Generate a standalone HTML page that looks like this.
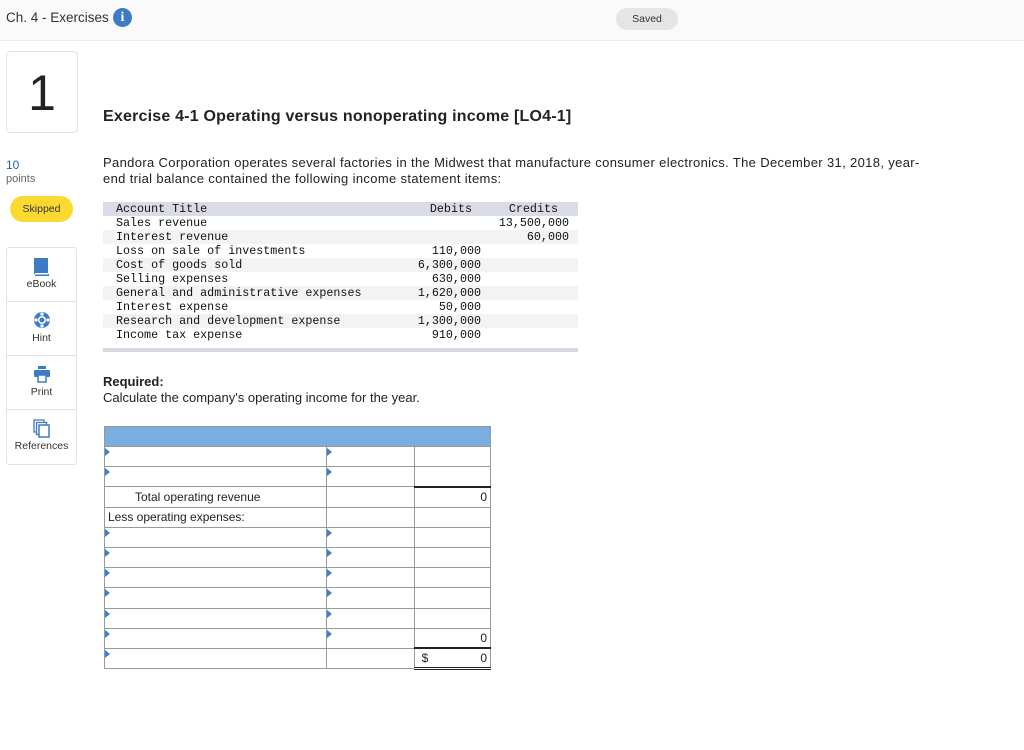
<!DOCTYPE html>
<html><head><style>
*{margin:0;padding:0;box-sizing:border-box}
body{width:1024px;height:750px;background:#fff;font-family:"Liberation Sans",sans-serif;color:#222;position:relative;overflow:hidden}
.abs{position:absolute}
.top{left:0;top:0;width:1024px;height:41px;background:#fafafa;border-bottom:1px solid #ececec}
.mono{font-family:"Liberation Mono",monospace;font-size:11.7px;line-height:14px;color:#111}
.tb{left:103px;width:475px}
.tb div{height:14px;position:relative;white-space:pre}
.tb span{position:absolute}
.side{left:6px;width:71px;border:1px solid #e2e2e2;border-radius:3px}
.side div{height:54px;border-bottom:1px solid #e2e2e2;text-align:center;font-size:10px;color:#333;position:relative}
.side div:last-child{border-bottom:none}
.side svg{position:absolute;left:26px;top:9px}
.side p{position:absolute;width:100%;top:30px}
table{border-collapse:collapse;font-size:12px}
td{border:1px solid #999;height:20.2px;position:relative;padding:0 3px}
.tri{position:absolute;left:0;top:1px;width:0;height:0;border-top:4px solid transparent;border-bottom:4px solid transparent;border-left:5px solid #3f7fc8}
</style></head><body>
<div class="abs top"></div>
<div class="abs" style="left:6px;top:10px;font-size:13.5px;color:#333">Ch. 4 - Exercises</div>
<div class="abs" style="left:113px;top:8px;width:19px;height:19px;border-radius:50%;background:#3d7bc4;color:#fff;font:bold 14px 'Liberation Serif',serif;text-align:center;line-height:19px">i</div>
<div class="abs" style="left:616px;top:8px;width:62px;height:22px;border-radius:11px;background:#e5e5e8;font-size:10.5px;text-align:center;line-height:22px;color:#333">Saved</div>

<div class="abs" style="left:6px;top:51px;width:72px;height:82px;border:1px solid #e2e2e2;border-radius:4px;text-align:center;font-size:50px;line-height:82px;color:#222">1</div>
<div class="abs" style="left:6px;top:158px;font-size:12px;color:#2a5ea8">10</div>
<div class="abs" style="left:6px;top:173px;font-size:11px;color:#666">points</div>
<div class="abs" style="left:10px;top:196px;width:63px;height:26px;border-radius:13px;background:#fcd930;font-size:10.5px;text-align:center;line-height:26px;color:#333">Skipped</div>

<div class="abs side" style="top:247px">
<div><svg width="17" height="20" viewBox="0 0 17 20"><rect x="1" y="1" width="14" height="16" fill="#3d7bc4"/><rect x="2" y="17" width="14" height="2" fill="#3d7bc4"/><rect x="2" y="16" width="13" height="1.5" fill="#fff"/></svg><p style="font-size:10.5px">eBook</p></div>
<div><svg width="18" height="18" viewBox="0 0 18 18"><circle cx="9" cy="9" r="8" fill="#3d7bc4"/><circle cx="9" cy="9" r="4" fill="#fff"/><circle cx="9" cy="9" r="2.5" fill="#3d7bc4"/><path d="M7.5 1.5h3v3h-3zM7.5 13.5h3v3h-3zM1.5 7.5h3v3h-3zM13.5 7.5h3v3h-3z" fill="#fff"/></svg><p style="font-size:10.5px">Hint</p></div>
<div><svg width="18" height="18" viewBox="0 0 18 18"><rect x="5" y="1" width="8" height="3" fill="#3d7bc4"/><rect x="1" y="5" width="16" height="7" rx="1" fill="#3d7bc4"/><rect x="5" y="10" width="8" height="7" fill="#fff" stroke="#3d7bc4" stroke-width="1.5"/></svg><p style="font-size:10.5px">Print</p></div>
<div><svg width="18" height="20" viewBox="0 0 18 20"><rect x="1" y="1" width="10" height="12" fill="#fff" stroke="#3d7bc4" stroke-width="1.3"/><rect x="3.5" y="3.5" width="10" height="12" fill="#fff" stroke="#3d7bc4" stroke-width="1.3"/><rect x="6" y="6" width="10" height="12" fill="#fff" stroke="#3d7bc4" stroke-width="1.5"/></svg><p style="font-size:10.5px">References</p></div>
</div>

<div class="abs" style="left:103px;top:108px;font-size:16px;font-weight:bold;color:#222;letter-spacing:0.2px;white-space:nowrap">Exercise 4-1 Operating versus nonoperating income [LO4-1]</div>
<div class="abs" style="left:103px;top:155px;width:860px;font-size:13px;line-height:15.5px;color:#222;white-space:nowrap;letter-spacing:0.35px">Pandora Corporation operates several factories in the Midwest that manufacture consumer electronics. The December 31, 2018, year-<br>end trial balance contained the following income statement items:</div>

<div class="abs tb mono" style="top:202px">
<div style="background:#d9dce6"><span style="left:13px">Account Title</span><span style="right:106px">Debits</span><span style="right:20px">Credits</span></div>
<div><span style="left:13px">Sales revenue</span><span style="right:9px">13,500,000</span></div>
<div style="background:#f3f3f3"><span style="left:13px">Interest revenue</span><span style="right:9px">60,000</span></div>
<div><span style="left:13px">Loss on sale of investments</span><span style="right:97px">110,000</span></div>
<div style="background:#f3f3f3"><span style="left:13px">Cost of goods sold</span><span style="right:97px">6,300,000</span></div>
<div><span style="left:13px">Selling expenses</span><span style="right:97px">630,000</span></div>
<div style="background:#f3f3f3"><span style="left:13px">General and administrative expenses</span><span style="right:97px">1,620,000</span></div>
<div><span style="left:13px">Interest expense</span><span style="right:97px">50,000</span></div>
<div style="background:#f3f3f3"><span style="left:13px">Research and development expense</span><span style="right:97px">1,300,000</span></div>
<div><span style="left:13px">Income tax expense</span><span style="right:97px">910,000</span></div>
<div style="height:6px"></div>
<div style="height:4px;background:#d5d8e0"></div>
</div>

<div class="abs" style="left:103px;top:374px;font-size:13px;font-weight:bold">Required:</div>
<div class="abs" style="left:103px;top:390px;font-size:13px">Calculate the company's operating income for the year.</div>

<table class="abs" style="left:104px;top:426px;width:387px">
<tr><td colspan="3" style="background:#7aaee0;height:20px;border-color:#999"></td></tr>
<tr><td style="width:222px"><span class="tri"></span></td><td style="width:88px"><span class="tri"></span></td><td></td></tr>
<tr><td><span class="tri"></span></td><td><span class="tri"></span></td><td style="border-bottom:2px solid #222"></td></tr>
<tr><td style="padding-left:30px">Total operating revenue</td><td></td><td style="text-align:right">0</td></tr>
<tr><td>Less operating expenses:</td><td></td><td></td></tr>
<tr><td><span class="tri"></span></td><td><span class="tri"></span></td><td></td></tr>
<tr><td><span class="tri"></span></td><td><span class="tri"></span></td><td></td></tr>
<tr><td><span class="tri"></span></td><td><span class="tri"></span></td><td></td></tr>
<tr><td><span class="tri"></span></td><td><span class="tri"></span></td><td></td></tr>
<tr><td><span class="tri"></span></td><td><span class="tri"></span></td><td></td></tr>
<tr><td><span class="tri"></span></td><td><span class="tri"></span></td><td style="text-align:right;border-bottom:2px solid #222">0</td></tr>
<tr><td><span class="tri"></span></td><td></td><td style="text-align:right;border-bottom:3px double #222">$<span style="display:inline-block;width:52px"></span>0</td></tr>
</table>
</body></html>
